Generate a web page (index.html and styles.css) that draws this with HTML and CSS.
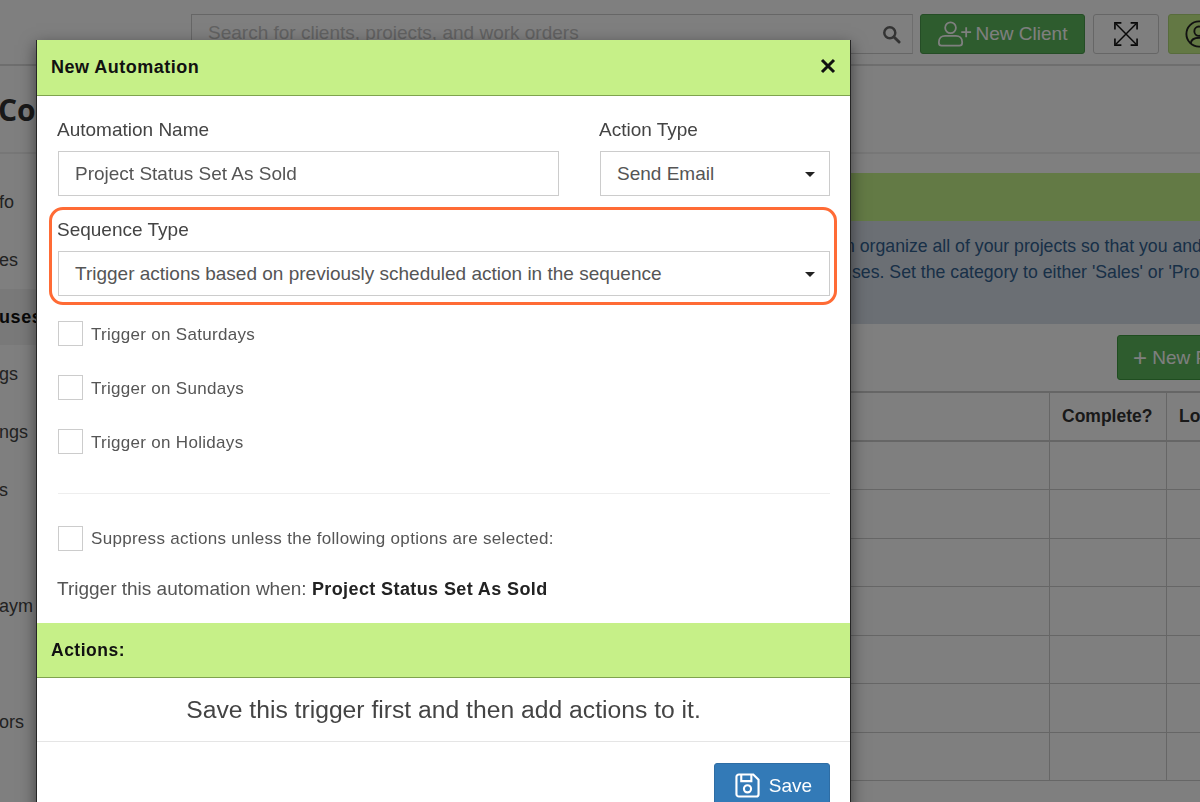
FILE: index.html
```html
<!DOCTYPE html>
<html lang="en">
<head>
<meta charset="utf-8">
<title>New Automation</title>
<link rel="stylesheet" href="styles.css">
</head>
<body>
<div class="page">
  <header class="topbar">
    <div class="search">
      <span class="search-text">Search for clients, projects, and work orders</span>
      <svg class="search-icon" viewBox="0 0 20 20"><circle cx="8.2" cy="8.2" r="5.8" fill="none" stroke="currentColor" stroke-width="2.6"/><path d="M12.6 12.6 18 18" stroke="currentColor" stroke-width="3" stroke-linecap="round"/></svg>
    </div>
    <button class="btn-new-client">
      <svg class="icon-user-plus" viewBox="0 0 38 30"><circle cx="14" cy="8" r="6" fill="none" stroke="currentColor" stroke-width="2"/><path d="M4 28a3 3 0 0 1-3-3v-1c0-4.500 3-7 7-7h12c4 0 7 2.500 7 7v1a3 3 0 0 1-3 3z" fill="none" stroke="currentColor" stroke-width="2"/><path d="M26 13h11M31.500 7.500v11" stroke="currentColor" stroke-width="2"/></svg>
      <span>New Client</span>
    </button>
    <button class="btn-expand">
      <svg class="icon-expand" viewBox="0 0 26 26"><path d="M2 2l22 22M24 2 2 24" stroke="currentColor" stroke-width="1.600"/><path d="M1 8V1h7M18 1h7v7M25 18v7h-7M8 25H1v-7" fill="none" stroke="currentColor" stroke-width="1.800"/></svg>
    </button>
    <button class="btn-account">
      <svg class="icon-account" viewBox="0 0 30 30"><circle cx="15" cy="15" r="13.500" fill="none" stroke="currentColor" stroke-width="2"/><circle cx="15" cy="12" r="5" fill="none" stroke="currentColor" stroke-width="2"/><path d="M6 25c1-5 5-6 9-6s8 1 9 6" fill="none" stroke="currentColor" stroke-width="2"/></svg>
    </button>
  </header>
  <div class="title-row"><h1 class="page-title">Co</h1></div>
  <div class="main">
    <nav class="sidebar">
      <div class="side-item">fo</div>
      <div class="side-item">es</div>
      <div class="side-item side-active">uses</div>
      <div class="side-item">gs</div>
      <div class="side-item">ngs</div>
      <div class="side-item">s</div>
      <div class="side-item"></div>
      <div class="side-item">aym</div>
      <div class="side-item"></div>
      <div class="side-item">ors</div>
    </nav>
    <section class="content">
      <div class="band-green"></div>
      <div class="band-info">
        <p>n organize all of your projects so that you and</p>
        <p>ses. Set the category to either 'Sales' or 'Proc</p>
      </div>
      <div class="content-actions">
        <button class="btn-new-status"><span class="plus">+</span> New Project Status</button>
      </div>
      <table class="status-table">
        <thead>
          <tr><th class="col-name"></th><th class="col-complete">Complete?</th><th class="col-lock">Lo</th></tr>
        </thead>
        <tbody>
          <tr><td></td><td></td><td></td></tr>
          <tr><td></td><td></td><td></td></tr>
          <tr><td></td><td></td><td></td></tr>
          <tr><td></td><td></td><td></td></tr>
          <tr><td></td><td></td><td></td></tr>
          <tr><td></td><td></td><td></td></tr>
          <tr><td></td><td></td><td></td></tr>
        </tbody>
      </table>
    </section>
  </div>
</div>
<div class="overlay"></div>
<div class="modal">
  <div class="bar modal-head">
    <span class="bar-title">New Automation</span>
    <svg class="close" viewBox="0 0 16 16"><path d="M2 2l12 12M14 2 2 14" stroke="currentColor" stroke-width="3"/></svg>
  </div>
  <div class="form">
    <div class="row-top">
      <div class="field field-name">
        <label class="label">Automation Name</label>
        <input class="control" type="text" value="Project Status Set As Sold" readonly>
      </div>
      <div class="field field-type">
        <label class="label">Action Type</label>
        <div class="control select">Send Email</div>
      </div>
    </div>
    <div class="field seq">
      <label class="label">Sequence Type</label>
      <div class="control select">Trigger actions based on previously scheduled action in the sequence</div>
    </div>
    <div class="checks">
      <div class="check"><span class="box"></span><span class="check-text">Trigger on Saturdays</span></div>
      <div class="check"><span class="box"></span><span class="check-text">Trigger on Sundays</span></div>
      <div class="check"><span class="box"></span><span class="check-text">Trigger on Holidays</span></div>
    </div>
    <hr class="rule">
    <div class="check"><span class="box"></span><span>Suppress actions unless the following options are selected:</span></div>
    <p class="when">Trigger this automation when: <strong>Project Status Set As Sold</strong></p>
  </div>
  <div class="bar actions-head"><span class="bar-title actions-title">Actions:</span></div>
  <p class="save-first">Save this trigger first and then add actions to it.</p>
  <div class="foot">
    <button class="btn-save">
      <svg class="icon-save" viewBox="0 0 26 26"><path d="M4 1.500h15l5.500 5.500v15a2.500 2.500 0 0 1-2.500 2.500H4A2.500 2.500 0 0 1 1.500 22V4A2.500 2.500 0 0 1 4 1.500z" fill="none" stroke="currentColor" stroke-width="2.200"/><path d="M6.500 2v6.500h10.500V2" fill="none" stroke="currentColor" stroke-width="2.200"/><circle cx="13" cy="16.500" r="3.700" fill="none" stroke="currentColor" stroke-width="2.200"/></svg>
      <span>Save</span>
    </button>
  </div>
</div>
</body>
</html>
```
FILE: styles.css
```css
* { box-sizing: border-box; }
html, body { margin: 0; padding: 0; height: 802px; overflow: hidden; }
body { font-family: "Liberation Sans", Arial, sans-serif; color: #333; background: #fff; }
button { font-family: inherit; }

.page { width: 1200px; height: 802px; overflow: hidden; display: flex; flex-direction: column; background: #fff; }

.topbar { height: 66px; flex: none; display: flex; align-items: flex-start; padding: 14px 0 0 191px; border-bottom: 2px solid #ddd; }
.search { width: 722px; height: 40px; flex: none; border: 1px solid #ccc; border-right-color: #ddd; display: flex; align-items: center; justify-content: space-between; padding: 0 11px 0 16px; }
.search-text { font-size: 19px; color: #c4c4c4; position: relative; top: -1px; }
.search-icon { width: 19px; height: 19px; color: #666; }
.btn-new-client { margin-left: 7px; width: 165px; height: 40px; flex: none; border: 1px solid #4a9a4c; border-radius: 3px; background: #5cb85c; color: #fff; display: flex; align-items: center; justify-content: center; gap: 4px; font-size: 19px; padding: 0; }
.icon-user-plus { width: 34px; height: 28px; }
.btn-expand { margin-left: 8px; width: 66px; height: 40px; flex: none; border: 1px solid #ccc; border-radius: 3px; background: #fff; color: #111; display: flex; align-items: center; justify-content: center; padding: 0; }
.icon-expand { width: 24px; height: 24px; }
.btn-account { margin-left: 9px; width: 60px; height: 40px; flex: none; border: 1px solid #b0d878; border-radius: 3px; background: #c6f088; color: #222; display: flex; align-items: center; padding: 0 0 0 16px; }
.icon-account { width: 28px; height: 28px; flex: none; }

.title-row { height: 88px; flex: none; border-bottom: 2px solid #eee; display: flex; align-items: flex-start; }
.page-title { margin: 26px 0 0 -2px; font-size: 30px; line-height: 36px; font-weight: 700; color: #333; font-family: "Open Sans", sans-serif; }

.main { flex: 1; display: flex; min-height: 0; }
.sidebar { width: 200px; flex: none; padding-top: 19px; }
.side-item { height: 58px; line-height: 58px; font-size: 18px; color: #444; margin-left: -1px; }
.side-active { height: 56px; background: #f2f2f2; font-weight: 700; color: #111; letter-spacing: .6px; line-height: 56px; }

.content { flex: none; width: 1200px; padding-top: 19px; }
.band-green { height: 48px; background: #c6f48a; }
.band-info { height: 103px; background: #d6dfe9; padding: 12px 0 0 0; color: #31608f; font-size: 17.700px; }
.band-info p { margin: 0; line-height: 26px; white-space: nowrap; }
.band-info p:first-child { margin-left: 645px; }
.band-info p:last-child { margin-left: 652px; }
.content-actions { height: 67px; padding: 11px 0 0 917px; }
.btn-new-status { width: 240px; height: 45px; border: 1px solid #3f9a41; border-radius: 3px; background: #5cb85c; color: #fff; font-size: 19px; text-align: left; padding: 0 0 0 15px; white-space: nowrap; }
.plus { font-size: 24px; line-height: 20px; vertical-align: -2px; }

.status-table { border-collapse: collapse; table-layout: fixed; width: 1100px; }
.status-table th { height: 49px; border: 1px solid #ccc; border-top-width: 2px; border-bottom-width: 2px; font-size: 17.500px; font-weight: 700; color: #333; text-align: left; padding: 0 12px; white-space: nowrap; }
.status-table td { height: 48.500px; border: 1px solid #ccc; }
.col-name { width: 849px; }
.col-complete { width: 117px; }
.col-lock { width: 134px; }

.overlay { position: fixed; inset: 0; background: rgba(0, 0, 0, .5); }

.modal { position: absolute; left: 36px; top: 40px; width: 815px; height: 780px; background: #fff; border: 1px solid rgba(0, 0, 0, .85); border-top: 0; box-shadow: 0 5px 15px rgba(0, 0, 0, .5); display: flex; flex-direction: column; }
.bar { flex: none; height: 56px; background: #c6f088; border-bottom: 1px solid #7fa34e; padding: 0 14px; display: flex; align-items: center; justify-content: space-between; }
.bar-title { font-size: 18px; font-weight: 700; color: #111; letter-spacing: .5px; }
.close { width: 16px; height: 16px; color: #111; margin-top: -3px; }

.form { padding: 22px 20px 22px 21px; }
.row-top { display: flex; gap: 41px; }
.field-name { width: 501px; }
.field-type { width: 230px; }
.label { display: block; height: 24px; line-height: 24px; font-size: 19px; color: #444; margin: 0 0 9px -1px; }
.control { display: block; width: 100%; height: 45px; border: 1.500px solid #ccc; background: #fff; font-family: inherit; font-size: 19px; color: #555; padding: 0 16px; line-height: 42px; outline: 0; }
.select { position: relative; line-height: 43px; }
.select::after { content: ""; position: absolute; right: 14px; top: 20px; border: 5px solid transparent; border-top-color: #222; border-bottom-width: 0; }
.seq { position: relative; margin-top: 22px; }
.seq::after { content: ""; position: absolute; left: -9px; right: -7px; top: -11px; bottom: -9px; border: 3px solid #ff6b35; border-radius: 14px; pointer-events: none; }

.checks { margin-top: 25px; display: flex; flex-direction: column; gap: 29px; }
.check { display: flex; align-items: center; gap: 8px; height: 25px; font-size: 17px; color: #555; letter-spacing: .3px; }
.check-text { padding-top: 2px; }
.box { width: 25px; height: 25.500px; flex: none; border: 1.500px solid #ccc; background: #fff; }
.rule { margin: 39px 0 32px; border: 0; border-top: 1px solid #eee; }
.when { margin: 26px 0 0 -1px; line-height: 24px; font-size: 19px; color: #555; }
.when strong { color: #222; font-size: 18px; letter-spacing: .4px; }

.actions-head { height: 55px; }
.actions-title { font-size: 17.500px; }
.save-first { flex: none; height: 64px; margin: 0; border-bottom: 1px solid #e5e5e5; text-align: center; font-size: 24.700px; line-height: 63px; color: #444; }
.foot { padding: 21px 20px 0 0; display: flex; justify-content: flex-end; }
.btn-save { width: 116px; height: 45px; border: 1px solid #2e6da4; border-radius: 3px; background: #337ab7; color: #fff; font-size: 19px; display: flex; align-items: center; justify-content: center; gap: 9px; padding: 0 0 0 3px; }
.icon-save { width: 25px; height: 25px; }
```
